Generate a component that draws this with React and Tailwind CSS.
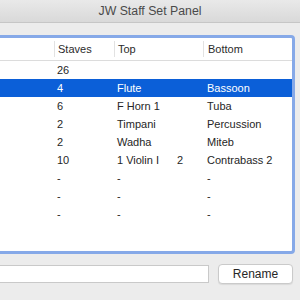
import React from 'react';

const rows = [
  { staves: '26', top: '', bottom: '' },
  { staves: '4', top: 'Flute', bottom: 'Bassoon', selected: true },
  { staves: '6', top: 'F Horn 1', bottom: 'Tuba' },
  { staves: '2', top: 'Timpani', bottom: 'Percussion' },
  { staves: '2', top: 'Wadha', bottom: 'Miteb' },
  { staves: '10', top: '1 Violin I', extra: '2', bottom: 'Contrabass 2' },
  { staves: '-', top: '-', bottom: '-' },
  { staves: '-', top: '-', bottom: '-' },
  { staves: '-', top: '-', bottom: '-' },
];

const App = () => {
  return (
    <div className="w-[300px] h-[300px] overflow-hidden bg-[#ececec] font-['Liberation_Sans',Arial,sans-serif] text-[#262626]">
      {/* Title bar */}
      <div className="h-[23px] flex items-center justify-center bg-gradient-to-b from-[#e9e9e9] to-[#d9d9d9] border-b border-[#c6c6c6]">
        <span className="text-[12.3px] text-[#4a4a4a]">JW Staff Set Panel</span>
      </div>

      {/* Table with focus ring */}
      <div className="mt-[12px] -ml-[6px] w-[301px] h-[219px] border-[3px] border-[#86a9e8] rounded-[4px] bg-white overflow-hidden">
        <div className="grid grid-cols-[57px_60px_89px_1fr] h-[23px] border-b border-[#dcdcdc] text-[11px] text-[#2b2b2b]">
          <div />
          <div className="self-center h-[16px] flex items-center pl-[3px] border-l border-[#e2e2e2]">Staves</div>
          <div className="self-center h-[16px] flex items-center pl-[3px] border-l border-[#e2e2e2]">Top</div>
          <div className="self-center h-[16px] flex items-center pl-[4px] border-l border-[#e2e2e2]">Bottom</div>
        </div>
        {rows.map((r, i) => (
          <div
            key={i}
            className={`grid grid-cols-[57px_60px_89px_1fr] h-[18px] items-center text-[11px] ${
              r.selected ? 'bg-[#0b5fd8] text-white' : 'text-[#262626]'
            }`}
          >
            <div />
            <div className="pl-[3px]">{r.staves}</div>
            <div className="pl-[3px] flex">
              <span className={r.extra ? 'w-[60px]' : ''}>{r.top}</span>
              {r.extra && <span>{r.extra}</span>}
            </div>
            <div className="pl-[4px]">{r.bottom}</div>
          </div>
        ))}
      </div>

      {/* Bottom controls */}
      <div className="mt-[10px] flex items-center">
        <div className="-ml-[8px] w-[217px] h-[18px] bg-white border border-[#c9c9c9]" />
        <button className="ml-[9px] w-[75px] h-[20px] bg-white border border-[#cacaca] rounded-[4px] shadow-[0_1px_1px_rgba(0,0,0,0.08)] text-[12px] text-[#262626] flex items-center justify-center">
          Rename
        </button>
      </div>
    </div>
  );
};

export default App;
